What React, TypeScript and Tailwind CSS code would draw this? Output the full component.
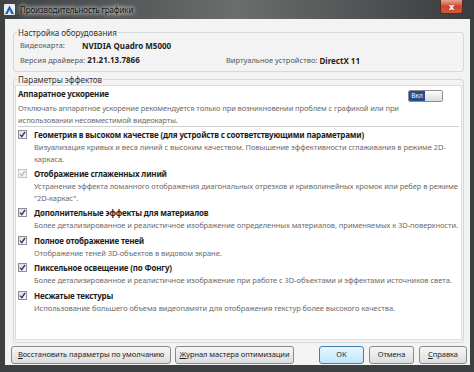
import React from 'react';

const FONT = { fontFamily: '"Noto Sans", "Open Sans", sans-serif' };

type Item = { title: string; desc: string[]; disabled?: boolean };

const ITEMS: Item[] = [
  {
    title: 'Геометрия в высоком качестве (для устройств с соответствующими параметрами)',
    desc: [
      'Визуализация кривых и веса линий с высоким качеством. Повышение эффективности сглаживания в режиме 2D-',
      'каркаса.',
    ],
  },
  {
    title: 'Отображение сглаженных линий',
    desc: [
      'Устранение эффекта ломанного отображения диагональных отрезков и криволинейных кромок или ребер в режиме',
      '"2D-каркас".',
    ],
    disabled: true,
  },
  {
    title: 'Дополнительные эффекты для материалов',
    desc: ['Более детализированное и реалистичное изображение определенных материалов, применяемых к 3D-поверхности.'],
  },
  {
    title: 'Полное отображение теней',
    desc: ['Отображение теней 3D-объектов в видовом экране.'],
  },
  {
    title: 'Пиксельное освещение (по Фонгу)',
    desc: ['Более детализированное и реалистичное изображение при работе с 3D-объектами и эффектами источников света.'],
  },
  {
    title: 'Несжатые текстуры',
    desc: ['Использование большего объема видеопамяти для отображения текстур более высокого качества.'],
  },
];

const Check: React.FC<{ disabled?: boolean }> = ({ disabled }) => (
  <span
    className={`mt-[2px] flex h-[9px] w-[9px] shrink-0 items-center justify-center border ${
      disabled ? 'border-[#c6c6c6] bg-[#f4f4f4]' : 'border-[#8e8f8f] bg-gradient-to-br from-[#dcdcdc] to-[#fbfbfb]'
    }`}
  >
    <svg width="7" height="7" viewBox="0 0 7 7">
      <path
        d="M1 3.6 L2.8 5.6 L6 1"
        fill="none"
        stroke={disabled ? '#b9b9b9' : '#2a3b73'}
        strokeWidth="1.4"
      />
    </svg>
  </span>
);

const Btn: React.FC<{ children: React.ReactNode; w: string; primary?: boolean }> = ({ children, w, primary }) => (
  <div
    className={`flex h-[18px] items-center justify-center whitespace-nowrap rounded-[3px] border text-[7.5px] tracking-[-0.05px] text-[#1e1e1e] ${w} ${
      primary
        ? 'border-[#3c7fb1] bg-gradient-to-b from-[#eaf6fd] to-[#bee6fd]'
        : 'border-[#8a8a8a] bg-gradient-to-b from-[#f6f6f6] to-[#dddddd]'
    }`}
  >
    {children}
  </div>
);

export default function App() {
  return (
    <div className="flex h-[372px] w-[474px] flex-col overflow-hidden bg-[#3d4041]" style={FONT}>
      {/* title bar */}
      <div className="flex h-[19px] shrink-0 items-center bg-gradient-to-r from-[#3f4243] via-[#6a6e6d] to-[#3a3d3e] pl-[4px]">
        <svg width="11" height="11" viewBox="0 0 11 11">
          <rect x="0" y="0" width="11" height="11" rx="1" fill="#e9eef3" />
          <path d="M5.5 1.5 L10 10 L7.4 10 L5.5 6 L3.6 10 L1 10 Z" fill="#1f5fb0" />
        </svg>
        <span className="ml-[5px] text-[8px] tracking-[-0.15px] text-[#111] [text-shadow:0_0_6px_#fff,0_0_4px_#fff]">
          Производительность графики
        </span>
        <div className="ml-auto mr-[11px] flex h-[14px] w-[23px] items-center justify-center self-start rounded-b-[3px] border border-t-0 border-[#5a2a22] bg-gradient-to-b from-[#e6a491] via-[#c9452c] to-[#d9573d]">
          <span className="text-[9px] font-bold leading-none text-white">x</span>
        </div>
      </div>

      {/* window body */}
      <div className="ml-[5px] mr-[4px] mb-[7px] flex flex-1 flex-col bg-[#f3f3f3] pl-[8px] pr-[6px] pb-[1px] pt-[8px] text-[#1e1e1e]">
        <fieldset className="rounded-[3px] border border-[#d3d9dd] px-[6px] pb-[3px]">
          <legend className="ml-[-3px] px-[1px] text-[8px] leading-[11px] text-[#333]">Настройка оборудования</legend>
          <div className="flex h-[15px] items-center text-[7.5px]">
            <span className="w-[62px] text-[#555]">Видеокарта:</span>
            <span className="text-[8px] font-bold">NVIDIA Quadro M5000</span>
          </div>
          <div className="flex h-[15px] items-center text-[7.5px]">
            <span className="w-[206px]">
              <span className="text-[#555]">Версия драйвера: </span>
              <span className="text-[8px] font-bold">21.21.13.7866</span>
            </span>
            <span className="text-[#555]">Виртуальное устройство: </span>
            <span className="ml-[2px] text-[8px] font-bold">DirectX 11</span>
          </div>
        </fieldset>

        <fieldset className="mt-[2px] flex flex-1 flex-col rounded-[3px] border border-[#d3d9dd] px-[1px] pb-[2px]">
          <legend className="ml-[2px] px-[1px] text-[8px] leading-[11px] text-[#333]">Параметры эффектов</legend>
          <div className="flex-1 border border-[#dcdcdc] bg-white px-[2px]">
            <div className="flex items-start pt-[1px]">
              <div className="flex-1">
                <div className="text-[8px] font-bold leading-[14px] tracking-[-0.2px]">Аппаратное ускорение</div>
                <div className="mt-[2px] whitespace-nowrap text-[7.5px] leading-[11.5px] tracking-[-0.1px] text-[#6a6a6a]">
                  Отключать аппаратное ускорение рекомендуется только при возникновении проблем с графикой или при
                  <br />
                  использовании несовместимой видеокарты.
                </div>
              </div>
              <div className="mr-[16px] mt-[3px] flex h-[12px] w-[35px] shrink-0 overflow-hidden rounded-[2px] border border-[#8d8d8d]">
                <span className="flex w-[16px] items-center justify-center bg-[#1f4f8f] text-[6.5px] text-white">Вкл</span>
                <span className="flex-1 bg-gradient-to-b from-[#fdfdfd] to-[#dcdcdc]" />
              </div>
            </div>
            <div className="border-t border-[#cfcfcf]" />
            <div className="flex flex-col gap-[2px] pt-[1px]">
              {ITEMS.map((it) => (
                <div key={it.title} className="flex gap-[7px]">
                  <Check disabled={it.disabled} />
                  <div>
                    <div className="text-[8px] font-bold leading-[14px] tracking-[-0.18px]">{it.title}</div>
                    <div className="whitespace-nowrap text-[7.5px] leading-[11.5px] tracking-[-0.05px] text-[#6a6a6a]">
                      {it.desc.map((d) => (
                        <div key={d}>{d}</div>
                      ))}
                    </div>
                  </div>
                </div>
              ))}
            </div>
          </div>
        </fieldset>

        <div className="-ml-[2px] -mr-[3px] mt-[3px] flex items-center">
          <Btn w="w-[160px]">
            <span>
              <u>В</u>осстановить параметры по умолчанию
            </span>
          </Btn>
          <Btn w="ml-[4px] w-[119px]">
            <span>
              <u>Ж</u>урнал мастера оптимизации
            </span>
          </Btn>
          <Btn w="ml-auto w-[45px]" primary>
            ОК
          </Btn>
          <Btn w="ml-[5px] w-[45px]">Отмена</Btn>
          <Btn w="ml-[5px] w-[48px]">
            <span>
              <u>С</u>правка
            </span>
          </Btn>
        </div>
      </div>
    </div>
  );
}
